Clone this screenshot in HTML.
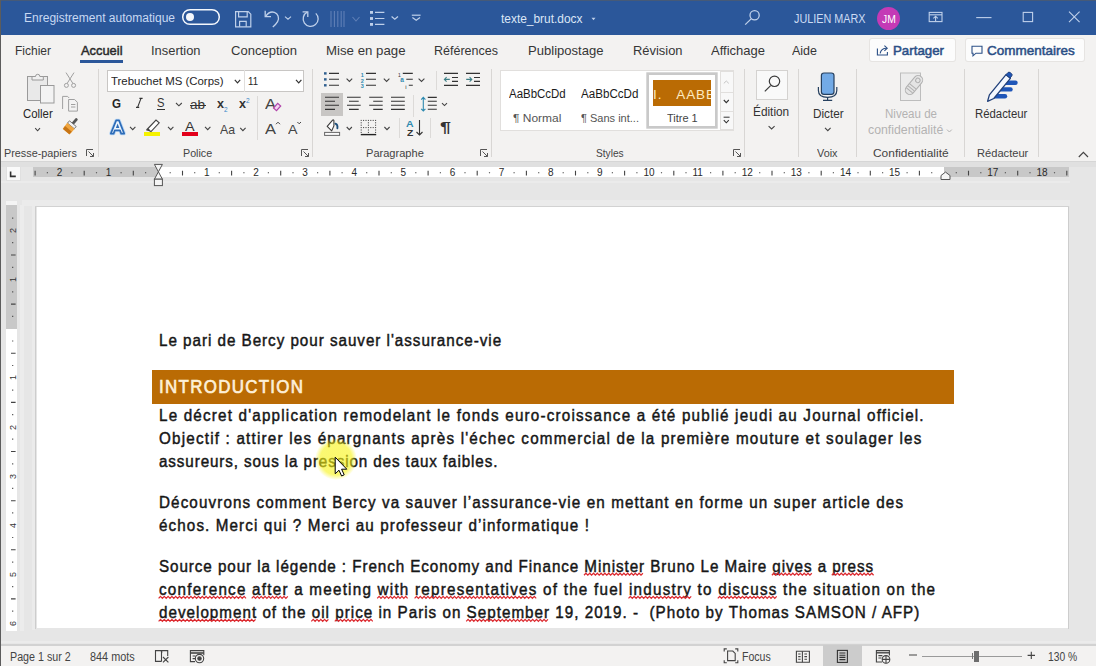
<!DOCTYPE html><html><head><meta charset='utf-8'><style>
html,body{margin:0;padding:0}body{width:1096px;height:666px;overflow:hidden;position:relative;background:#e6e6e6;font-family:'Liberation Sans',sans-serif}
.t{position:absolute;white-space:pre;line-height:1;transform-origin:0 0}.sq{}
</style></head><body>
<div style='position:absolute;left:0px;top:0px;width:1096px;height:35px;background:#2b579a;'></div>
<div style='position:absolute;left:0px;top:0px;width:1096px;height:1px;background:#465a78;'></div>
<div style='position:absolute;left:876.8px;top:6.5px;width:23.6px;height:23.6px;background:#c43ab6;border-radius:50%'></div>
<div style='position:absolute;left:0px;top:35px;width:1096px;height:126px;background:#f3f2f1;'></div>
<div style='position:absolute;left:80px;top:60px;width:43px;height:3px;background:#2b579a;'></div>
<div style='position:absolute;left:869.5px;top:39px;width:85px;height:22px;background:#fcfcfc;border-radius:2px;box-shadow:0 0 0 1px #e6e4e2'></div>
<div style='position:absolute;left:965.5px;top:39px;width:118.5px;height:22px;background:#fcfcfc;border-radius:2px;box-shadow:0 0 0 1px #e6e4e2'></div>
<div style='position:absolute;left:98px;top:69px;width:1px;height:88px;background:#d8d6d4;'></div>
<div style='position:absolute;left:312px;top:69px;width:1px;height:88px;background:#d8d6d4;'></div>
<div style='position:absolute;left:491px;top:69px;width:1px;height:88px;background:#d8d6d4;'></div>
<div style='position:absolute;left:744px;top:69px;width:1px;height:88px;background:#d8d6d4;'></div>
<div style='position:absolute;left:798px;top:69px;width:1px;height:88px;background:#d8d6d4;'></div>
<div style='position:absolute;left:856px;top:69px;width:1px;height:88px;background:#d8d6d4;'></div>
<div style='position:absolute;left:964px;top:69px;width:1px;height:88px;background:#d8d6d4;'></div>
<div style='position:absolute;left:1038px;top:69px;width:1px;height:88px;background:#d8d6d4;'></div>
<div style='position:absolute;left:106.5px;top:69.5px;width:197.5px;height:22px;background:#ffffff;box-shadow:inset 0 0 0 1px #c8c6c4'></div>
<div style='position:absolute;left:243.5px;top:69.5px;width:1px;height:22px;background:#e1dfdd;'></div>
<div style='position:absolute;left:157.2px;top:109px;width:7.6px;height:1.2px;background:#333;'></div>
<div style='position:absolute;left:189.8px;top:105px;width:16.2px;height:1.1px;background:#333;'></div>
<div style='position:absolute;left:257px;top:96px;width:1px;height:44px;background:#dcdad8;'></div>
<div style='position:absolute;left:143.7px;top:131.6px;width:16px;height:4px;background:#f5f200;'></div>
<div style='position:absolute;left:181.8px;top:131.6px;width:16.1px;height:4px;background:#e3001b;'></div>
<div style='position:absolute;left:435.5px;top:71px;width:1px;height:19px;background:#dcdad8;'></div>
<div style='position:absolute;left:321.2px;top:92.6px;width:21.7px;height:23px;background:#c8c6c4;'></div>
<div style='position:absolute;left:413px;top:95px;width:1px;height:22px;background:#dcdad8;'></div>
<div style='position:absolute;left:399px;top:118px;width:1px;height:20px;background:#dcdad8;'></div>
<div style='position:absolute;left:430.4px;top:118px;width:1px;height:20px;background:#dcdad8;'></div>
<div style='position:absolute;left:501.4px;top:70.7px;width:232px;height:59.5px;background:#ffffff;box-shadow:0 0 0 1px #e1dfdd'></div>
<div style='position:absolute;left:648.9px;top:75.4px;width:66.2px;height:50.6px;background:#ffffff;box-shadow:0 0 0 2.7px #c9c9c9'></div>
<div style='position:absolute;left:653px;top:80.2px;width:58px;height:25.5px;background:#ba6b04;'></div>
<div style='position:absolute;left:653px;top:80.2px;width:58px;height:25.5px;overflow:hidden'><div class='t' style='left:0px;top:7.4px;font-size:13.5px;color:#fde9c0;letter-spacing:0.9px;font-family:"Liberation Sans",sans-serif'>I.&nbsp;&nbsp;&nbsp;AABBCC</div></div>
<div style='position:absolute;left:719.6px;top:71px;width:14px;height:59px;background:#f8f8f8;box-shadow:inset 0 0 0 1px #e1dfdd'></div>
<div style='position:absolute;left:719.6px;top:92px;width:14px;height:1px;background:#e1dfdd;'></div>
<div style='position:absolute;left:719.6px;top:110.8px;width:14px;height:1px;background:#e1dfdd;'></div>
<div style='position:absolute;left:756px;top:69.5px;width:32px;height:30.3px;background:#f9f9f9;box-shadow:inset 0 0 0 1px #d4d2d0'></div>
<div style='position:absolute;left:0px;top:162px;width:1096px;height:483px;background:#e6e6e6;'></div>
<div style='position:absolute;left:0px;top:161px;width:1096px;height:1.4px;background:#d6d6d6;'></div>
<div style='position:absolute;left:0px;top:162.4px;width:1096px;height:4.6px;background:#e0e0e0;'></div>
<div style='position:absolute;left:6.6px;top:167.3px;width:13px;height:12.3px;background:#fafafa;box-shadow:0 0 0 1px #e0e0e0'></div>
<div style='position:absolute;left:32.8px;top:167.1px;width:1036.2px;height:9.5px;background:#ffffff;'></div>
<div style='position:absolute;left:32.8px;top:167.1px;width:125.1px;height:9.5px;background:#c8c8c8;'></div>
<div style='position:absolute;left:943.8px;top:167.1px;width:125.2px;height:9.5px;background:#c8c8c8;'></div>
<div style='position:absolute;left:0px;top:181px;width:1070px;height:1.6px;background:#ebebeb;'></div>
<div style='position:absolute;left:22px;top:200.2px;width:1048px;height:5.4px;background:#ebebeb;'></div>
<div style='position:absolute;left:6.3px;top:200.7px;width:10.4px;height:4.5px;background:#f4f4f4;'></div>
<div style='position:absolute;left:19.5px;top:205px;width:4px;height:426px;background:#ececec;'></div>
<div style='position:absolute;left:6.3px;top:205.2px;width:10.4px;height:123.5px;background:#c8c8c8;'></div>
<div style='position:absolute;left:6.3px;top:328.7px;width:10.4px;height:302px;background:#ffffff;'></div>
<div style='position:absolute;left:32.3px;top:206px;width:2.7px;height:424px;background:#ebebeb;'></div>
<div style='position:absolute;left:36.5px;top:206.8px;width:1031.4px;height:421.7px;background:#ffffff;'></div>
<div style='position:absolute;left:35.4px;top:206px;width:1.1px;height:423px;background:#cdcdcd;'></div>
<div style='position:absolute;left:1067.9px;top:206px;width:1.3px;height:423px;background:#cdcdcd;'></div>
<div style='position:absolute;left:35.4px;top:206px;width:1033.8px;height:0.8px;background:#d2d2d2;'></div>
<div style='position:absolute;left:152px;top:370.3px;width:802px;height:34.2px;background:#ba6b04;'></div>
<div style='position:absolute;left:0px;top:640.6px;width:1096px;height:2.2px;background:#ebebeb;'></div>
<div style='position:absolute;left:0px;top:645px;width:1096px;height:21px;background:#f3f2f1;'></div>
<div style='position:absolute;left:0px;top:644.4px;width:1096px;height:1.2px;background:#d2d2d2;'></div>
<div style='position:absolute;left:823px;top:644.6px;width:38.5px;height:21.4px;background:#cccccc;'></div>
<div style='position:absolute;left:921.5px;top:656px;width:100.5px;height:1px;background:#9a9a9a;'></div>
<div style='position:absolute;left:972.3px;top:653px;width:1px;height:6px;background:#777;'></div>
<div style='position:absolute;left:974px;top:651.2px;width:5px;height:10.4px;background:#6e6e6e;'></div>
<div class='t' style='left:24px;top:11.80px;font-size:12px;font-weight:400;color:#c8d9f3;font-family:"Liberation Sans", sans-serif;transform:scaleX(1.0017);'>Enregistrement automatique</div>
<div class='t' style='left:501px;top:12.80px;font-size:12px;font-weight:400;color:#dbe6f6;font-family:"Liberation Sans", sans-serif;transform:scaleX(0.9931);'>texte_brut.docx</div>
<div class='t' style='left:794px;top:12.70px;font-size:12px;font-weight:400;color:#cddcf3;font-family:"Liberation Sans", sans-serif;transform:scaleX(0.9010);'>JULIEN MARX</div>
<div class='t' style='left:881.6px;top:13.55px;font-size:11px;font-weight:400;color:#ffffff;font-family:"Liberation Sans", sans-serif;transform:scaleX(0.9406);'>JM</div>
<div class='t' style='left:15px;top:45.12px;font-size:12.8px;font-weight:400;color:#363636;font-family:"Liberation Sans", sans-serif;transform:scaleX(0.9373);'>Fichier</div>
<div class='t' style='left:80.5px;top:45.12px;font-size:12.8px;font-weight:400;color:#2a2a2a;font-family:"Liberation Sans", sans-serif;transform:scaleX(1.0057);-webkit-text-stroke:0.45px #2a2a2a'>Accueil</div>
<div class='t' style='left:151px;top:45.12px;font-size:12.8px;font-weight:400;color:#363636;font-family:"Liberation Sans", sans-serif;transform:scaleX(1.0083);'>Insertion</div>
<div class='t' style='left:231px;top:45.12px;font-size:12.8px;font-weight:400;color:#363636;font-family:"Liberation Sans", sans-serif;transform:scaleX(1.0193);'>Conception</div>
<div class='t' style='left:326px;top:45.12px;font-size:12.8px;font-weight:400;color:#363636;font-family:"Liberation Sans", sans-serif;transform:scaleX(1.0346);'>Mise en page</div>
<div class='t' style='left:434px;top:45.12px;font-size:12.8px;font-weight:400;color:#363636;font-family:"Liberation Sans", sans-serif;transform:scaleX(0.9778);'>Références</div>
<div class='t' style='left:527.5px;top:45.12px;font-size:12.8px;font-weight:400;color:#363636;font-family:"Liberation Sans", sans-serif;transform:scaleX(1.0203);'>Publipostage</div>
<div class='t' style='left:633px;top:45.12px;font-size:12.8px;font-weight:400;color:#363636;font-family:"Liberation Sans", sans-serif;transform:scaleX(1.0086);'>Révision</div>
<div class='t' style='left:710.5px;top:45.12px;font-size:12.8px;font-weight:400;color:#363636;font-family:"Liberation Sans", sans-serif;transform:scaleX(1.0165);'>Affichage</div>
<div class='t' style='left:792px;top:45.12px;font-size:12.8px;font-weight:400;color:#363636;font-family:"Liberation Sans", sans-serif;transform:scaleX(0.9756);'>Aide</div>
<div class='t' style='left:893.4px;top:44.72px;font-size:12.8px;font-weight:400;color:#2b4f86;font-family:"Liberation Sans", sans-serif;transform:scaleX(1.0388);-webkit-text-stroke:0.5px #2b4f86'>Partager</div>
<div class='t' style='left:987px;top:44.72px;font-size:12.8px;font-weight:400;color:#2b4f86;font-family:"Liberation Sans", sans-serif;transform:scaleX(1.0538);-webkit-text-stroke:0.5px #2b4f86'>Commentaires</div>
<div class='t' style='left:4.4px;top:147.72px;font-size:11.5px;font-weight:400;color:#444;font-family:"Liberation Sans", sans-serif;transform:scaleX(0.9413);'>Presse-papiers</div>
<div class='t' style='left:182.5px;top:147.72px;font-size:11.5px;font-weight:400;color:#444;font-family:"Liberation Sans", sans-serif;transform:scaleX(0.9321);'>Police</div>
<div class='t' style='left:365.5px;top:147.72px;font-size:11.5px;font-weight:400;color:#444;font-family:"Liberation Sans", sans-serif;transform:scaleX(0.9616);'>Paragraphe</div>
<div class='t' style='left:596.4px;top:147.72px;font-size:11.5px;font-weight:400;color:#444;font-family:"Liberation Sans", sans-serif;transform:scaleX(0.8810);'>Styles</div>
<div class='t' style='left:817.2px;top:147.72px;font-size:11.5px;font-weight:400;color:#444;font-family:"Liberation Sans", sans-serif;transform:scaleX(0.9425);'>Voix</div>
<div class='t' style='left:872.9px;top:147.72px;font-size:11.5px;font-weight:400;color:#444;font-family:"Liberation Sans", sans-serif;transform:scaleX(1.0372);'>Confidentialité</div>
<div class='t' style='left:976.5px;top:147.72px;font-size:11.5px;font-weight:400;color:#444;font-family:"Liberation Sans", sans-serif;transform:scaleX(0.9668);'>Rédacteur</div>
<div class='t' style='left:22.7px;top:108.20px;font-size:12px;font-weight:400;color:#262626;font-family:"Liberation Sans", sans-serif;transform:scaleX(0.9476);'>Coller</div>
<div class='t' style='left:110.8px;top:76.17px;font-size:11.8px;font-weight:400;color:#262626;font-family:"Liberation Sans", sans-serif;transform:scaleX(0.9676);'>Trebuchet MS (Corps)</div>
<div class='t' style='left:248px;top:76.17px;font-size:11.8px;font-weight:400;color:#262626;font-family:"Liberation Sans", sans-serif;transform:scaleX(0.8163);'>11</div>
<div class='t' style='left:112px;top:96.75px;font-size:13px;font-weight:700;color:#262626;font-family:"Liberation Sans", sans-serif;transform:scaleX(0.8889);'>G</div>
<div class='t' style='left:157.2px;top:97.38px;font-size:12.5px;font-weight:400;color:#333;font-family:"Liberation Sans", sans-serif;transform:scaleX(0.8989);'>S</div>
<div class='t' style='left:190.2px;top:98.88px;font-size:12.5px;font-weight:400;color:#333;font-family:"Liberation Sans", sans-serif;transform:scaleX(1.0787);'>ab</div>
<div class='t' style='left:217px;top:98.38px;font-size:12.5px;font-weight:700;color:#333;font-family:"Liberation Sans", sans-serif;transform:scaleX(1.0067);'>x</div>
<div class='t' style='left:224.2px;top:106.20px;font-size:8px;font-weight:400;color:#3a86c8;font-family:"Liberation Sans", sans-serif;transform:scaleX(0.8084);'>2</div>
<div class='t' style='left:238.6px;top:98.38px;font-size:12.5px;font-weight:700;color:#333;font-family:"Liberation Sans", sans-serif;transform:scaleX(1.0067);'>x</div>
<div class='t' style='left:245.8px;top:97.20px;font-size:8px;font-weight:400;color:#3a86c8;font-family:"Liberation Sans", sans-serif;transform:scaleX(0.8084);'>2</div>
<div class='t' style='left:264.6px;top:97.10px;font-size:14px;font-weight:400;color:#444;font-family:"Liberation Sans", sans-serif;transform:scaleX(1.1773);'>A</div>
<div class='t' style='left:185.4px;top:120.15px;font-size:13px;font-weight:400;color:#333;font-family:"Liberation Sans", sans-serif;transform:scaleX(1.1070);'>A</div>
<div class='t' style='left:219.7px;top:123.15px;font-size:13px;font-weight:400;color:#444;font-family:"Liberation Sans", sans-serif;transform:scaleX(0.9430);'>Aa</div>
<div class='t' style='left:264.6px;top:122.10px;font-size:14px;font-weight:400;color:#444;font-family:"Liberation Sans", sans-serif;transform:scaleX(1.1773);'>A</div>
<div class='t' style='left:288.3px;top:123.80px;font-size:12px;font-weight:400;color:#444;font-family:"Liberation Sans", sans-serif;transform:scaleX(1.1852);'>A</div>
<div class='t' style='left:360.8px;top:72.73px;font-size:5.5px;font-weight:700;color:#2e8ab0;font-family:"Liberation Sans", sans-serif;'>1</div>
<div class='t' style='left:360.8px;top:78.53px;font-size:5.5px;font-weight:700;color:#2e8ab0;font-family:"Liberation Sans", sans-serif;'>2</div>
<div class='t' style='left:360.8px;top:84.33px;font-size:5.5px;font-weight:700;color:#2e8ab0;font-family:"Liberation Sans", sans-serif;'>3</div>
<div class='t' style='left:398px;top:72.75px;font-size:5px;font-weight:400;color:#333333;font-family:"Liberation Sans", sans-serif;'>1</div>
<div class='t' style='left:400.2px;top:77.07px;font-size:6.5px;font-weight:700;color:#2e8ab0;font-family:"Liberation Sans", sans-serif;'>a</div>
<div class='t' style='left:405.2px;top:83.50px;font-size:6px;font-weight:400;color:#333333;font-family:"Liberation Sans", sans-serif;'>i</div>
<div class='t' style='left:406.1px;top:120.28px;font-size:8.5px;font-weight:700;color:#2e8ab0;font-family:"Liberation Sans", sans-serif;transform:scaleX(1.2377);'>A</div>
<div class='t' style='left:406.8px;top:129.18px;font-size:8.5px;font-weight:700;color:#333;font-family:"Liberation Sans", sans-serif;transform:scaleX(1.2108);'>Z</div>
<div class='t' style='left:440.4px;top:119.42px;font-size:15.5px;font-weight:700;color:#333;font-family:"Liberation Sans", sans-serif;transform:scaleX(1.2754);'>¶</div>
<div class='t' style='left:509px;top:88.17px;font-size:12.5px;font-weight:400;color:#1a1a1a;font-family:"Liberation Sans", sans-serif;transform:scaleX(0.9168);'>AaBbCcDd</div>
<div class='t' style='left:513.3px;top:113.02px;font-size:11.5px;font-weight:400;color:#555;font-family:"Liberation Sans", sans-serif;transform:scaleX(1.0423);'>¶ Normal</div>
<div class='t' style='left:580.6px;top:88.17px;font-size:12.5px;font-weight:400;color:#1a1a1a;font-family:"Liberation Sans", sans-serif;transform:scaleX(0.9281);'>AaBbCcDd</div>
<div class='t' style='left:580.6px;top:113.02px;font-size:11.5px;font-weight:400;color:#555;font-family:"Liberation Sans", sans-serif;transform:scaleX(0.9584);'>¶ Sans int...</div>
<div class='t' style='left:666.5px;top:112.72px;font-size:11.5px;font-weight:400;color:#444;font-family:"Liberation Sans", sans-serif;transform:scaleX(0.9542);'>Titre 1</div>
<div class='t' style='left:753.4px;top:106.30px;font-size:12px;font-weight:400;color:#333;font-family:"Liberation Sans", sans-serif;transform:scaleX(0.9863);'>Édition</div>
<div class='t' style='left:812.5px;top:108.00px;font-size:12px;font-weight:400;color:#333;font-family:"Liberation Sans", sans-serif;transform:scaleX(0.9795);'>Dicter</div>
<div class='t' style='left:884.7px;top:108.20px;font-size:12px;font-weight:400;color:#b3b3b3;font-family:"Liberation Sans", sans-serif;transform:scaleX(0.9621);'>Niveau de</div>
<div class='t' style='left:867.7px;top:124.10px;font-size:12px;font-weight:400;color:#b3b3b3;font-family:"Liberation Sans", sans-serif;transform:scaleX(1.0260);'>confidentialité</div>
<div class='t' style='left:975.4px;top:108.00px;font-size:12px;font-weight:400;color:#333;font-family:"Liberation Sans", sans-serif;transform:scaleX(0.9463);'>Rédacteur</div>
<div class='t' style='left:56.64px;top:168.10px;font-size:10px;font-weight:400;color:#2a2a2a;font-family:"Liberation Sans", sans-serif;'>2</div>
<div class='t' style='left:105.77000000000001px;top:168.10px;font-size:10px;font-weight:400;color:#2a2a2a;font-family:"Liberation Sans", sans-serif;'>1</div>
<div class='t' style='left:204.03px;top:168.10px;font-size:10px;font-weight:400;color:#2a2a2a;font-family:"Liberation Sans", sans-serif;'>1</div>
<div class='t' style='left:253.16000000000003px;top:168.10px;font-size:10px;font-weight:400;color:#2a2a2a;font-family:"Liberation Sans", sans-serif;'>2</div>
<div class='t' style='left:302.29px;top:168.10px;font-size:10px;font-weight:400;color:#2a2a2a;font-family:"Liberation Sans", sans-serif;'>3</div>
<div class='t' style='left:351.42px;top:168.10px;font-size:10px;font-weight:400;color:#2a2a2a;font-family:"Liberation Sans", sans-serif;'>4</div>
<div class='t' style='left:400.55px;top:168.10px;font-size:10px;font-weight:400;color:#2a2a2a;font-family:"Liberation Sans", sans-serif;'>5</div>
<div class='t' style='left:449.68000000000006px;top:168.10px;font-size:10px;font-weight:400;color:#2a2a2a;font-family:"Liberation Sans", sans-serif;'>6</div>
<div class='t' style='left:498.81000000000006px;top:168.10px;font-size:10px;font-weight:400;color:#2a2a2a;font-family:"Liberation Sans", sans-serif;'>7</div>
<div class='t' style='left:547.94px;top:168.10px;font-size:10px;font-weight:400;color:#2a2a2a;font-family:"Liberation Sans", sans-serif;'>8</div>
<div class='t' style='left:597.07px;top:168.10px;font-size:10px;font-weight:400;color:#2a2a2a;font-family:"Liberation Sans", sans-serif;'>9</div>
<div class='t' style='left:643.4000000000001px;top:168.10px;font-size:10px;font-weight:400;color:#2a2a2a;font-family:"Liberation Sans", sans-serif;'>10</div>
<div class='t' style='left:692.5300000000001px;top:168.10px;font-size:10px;font-weight:400;color:#2a2a2a;font-family:"Liberation Sans", sans-serif;'>11</div>
<div class='t' style='left:741.6600000000001px;top:168.10px;font-size:10px;font-weight:400;color:#2a2a2a;font-family:"Liberation Sans", sans-serif;'>12</div>
<div class='t' style='left:790.7900000000001px;top:168.10px;font-size:10px;font-weight:400;color:#2a2a2a;font-family:"Liberation Sans", sans-serif;'>13</div>
<div class='t' style='left:839.9200000000001px;top:168.10px;font-size:10px;font-weight:400;color:#2a2a2a;font-family:"Liberation Sans", sans-serif;'>14</div>
<div class='t' style='left:889.0500000000001px;top:168.10px;font-size:10px;font-weight:400;color:#2a2a2a;font-family:"Liberation Sans", sans-serif;'>15</div>
<div class='t' style='left:987.3100000000001px;top:168.10px;font-size:10px;font-weight:400;color:#2a2a2a;font-family:"Liberation Sans", sans-serif;'>17</div>
<div class='t' style='left:1036.44px;top:168.10px;font-size:10px;font-weight:400;color:#2a2a2a;font-family:"Liberation Sans", sans-serif;'>18</div>
<div class='t' style='left:158.6px;top:333.20px;font-size:16px;font-weight:400;color:#161616;font-family:"Liberation Sans", sans-serif;letter-spacing:1.0232px;transform:scaleX(0.95);-webkit-text-stroke:0.45px #161616'>Le pari de Bercy pour sauver l'assurance-vie</div>
<div class='t' style='left:158.6px;top:407.80px;font-size:16px;font-weight:400;color:#161616;font-family:"Liberation Sans", sans-serif;letter-spacing:1.2595px;transform:scaleX(0.95);-webkit-text-stroke:0.45px #161616'>Le décret d'application remodelant le fonds euro-croissance a été publié jeudi au Journal officiel.</div>
<div class='t' style='left:158.6px;top:431.10px;font-size:16px;font-weight:400;color:#161616;font-family:"Liberation Sans", sans-serif;letter-spacing:1.2679px;transform:scaleX(0.95);-webkit-text-stroke:0.45px #161616'>Objectif : attirer les épargnants après l'échec commercial de la première mouture et soulager les</div>
<div class='t' style='left:158.6px;top:454.40px;font-size:16px;font-weight:400;color:#161616;font-family:"Liberation Sans", sans-serif;letter-spacing:0.9405px;transform:scaleX(0.95);-webkit-text-stroke:0.45px #161616'>assureurs, sous la pression des taux faibles.</div>
<div class='t' style='left:158.6px;top:494.90px;font-size:16px;font-weight:400;color:#161616;font-family:"Liberation Sans", sans-serif;letter-spacing:1.1724px;transform:scaleX(0.95);-webkit-text-stroke:0.45px #161616'>Découvrons comment Bercy va sauver l’assurance-vie en mettant en forme un super article des</div>
<div class='t' style='left:158.6px;top:518.40px;font-size:16px;font-weight:400;color:#161616;font-family:"Liberation Sans", sans-serif;letter-spacing:1.1688px;transform:scaleX(0.95);-webkit-text-stroke:0.45px #161616'>échos. Merci qui ? Merci au professeur d’informatique !</div>
<div class='t' style='left:158.6px;top:558.60px;font-size:16px;font-weight:400;color:#161616;font-family:"Liberation Sans", sans-serif;letter-spacing:0.9820px;transform:scaleX(0.95);-webkit-text-stroke:0.45px #161616'>Source pour la légende : French Economy and Finance <span class='sq'>Minister</span> Bruno Le Maire <span class='sq'>gives</span> a <span class='sq'>press</span></div>
<div class='t' style='left:158.6px;top:581.80px;font-size:16px;font-weight:400;color:#161616;font-family:"Liberation Sans", sans-serif;letter-spacing:1.3060px;transform:scaleX(0.95);-webkit-text-stroke:0.45px #161616'><span class='sq'>conference</span> <span class='sq'>after</span> a meeting <span class='sq'>with</span> <span class='sq'>representatives</span> of the fuel <span class='sq'>industry</span> to <span class='sq'>discuss</span> the situation on the</div>
<div class='t' style='left:158.6px;top:604.80px;font-size:16px;font-weight:400;color:#161616;font-family:"Liberation Sans", sans-serif;letter-spacing:1.0634px;transform:scaleX(0.95);-webkit-text-stroke:0.45px #161616'><span class='sq'>development</span> of the <span class='sq'>oil</span> <span class='sq'>price</span> in Paris on <span class='sq'>September</span> 19, 2019. -  (Photo by Thomas SAMSON / AFP)</div>
<div class='t' style='left:159.2px;top:377.62px;font-size:18.8px;font-weight:400;color:#fdf0d8;font-family:"Liberation Sans", sans-serif;letter-spacing:1.4560px;transform:scaleX(0.9);-webkit-text-stroke:0.7px #fdf0d8'>INTRODUCTION</div>
<div class='t' style='left:9.6px;top:651.00px;font-size:12px;font-weight:400;color:#444;font-family:"Liberation Sans", sans-serif;transform:scaleX(0.8920);'>Page 1 sur 2</div>
<div class='t' style='left:90.3px;top:651.00px;font-size:12px;font-weight:400;color:#444;font-family:"Liberation Sans", sans-serif;transform:scaleX(0.9056);'>844 mots</div>
<div class='t' style='left:741.6px;top:651.30px;font-size:12px;font-weight:400;color:#444;font-family:"Liberation Sans", sans-serif;transform:scaleX(0.8780);'>Focus</div>
<div class='t' style='left:1048.4px;top:650.60px;font-size:12px;font-weight:400;color:#444;font-family:"Liberation Sans", sans-serif;transform:scaleX(0.8580);'>130 %</div>
<svg style='position:absolute;left:0;top:0' width='1096' height='666' viewBox='0 0 1096 666'><rect x='182.7' y='9.7' width='36.6' height='14.6' rx='7.3' fill='none' stroke='#f4f7fc' stroke-width='1.5'/><circle cx='190' cy='17' r='4' fill='#f4f7fc'/><g fill='none' stroke='#bfd0ea' stroke-width='1.2'><path d='M235.6 11.6h12.6l2.6 2.6v12.6h-15.2z'/><path d='M238.6 11.6v5.2h8.6v-5.2'/><path d='M239.6 26.8v-5.4h6.6v5.4'/></g><g fill='none' stroke='#bfd0ea' stroke-width='1.3'><path d='M265.2 10.8v5.8h5.8'/><path d='M265.8 16.2c2.5-3.6 5.6-4.8 8.6-3.8 3.6 1.2 5.2 5.4 3.2 9.2-1.2 2.2-3 3.8-4.8 5.4'/></g><path d='M285 16.6 l3.0 2.6 l3.0 -2.6' fill='none' stroke='#bfd0ea' stroke-width='1.1'/><g fill='none' stroke='#bfd0ea' stroke-width='1.3'><path d='M315.8 13.4a7.5 7.5 0 1 1 -8.6 -1.2'/><path d='M302.6 11.8h5.2v5.2'/></g><g fill='none' stroke='#5f7fb6' stroke-width='1.1'><path d='M331 11v16M334.4 11v16M337.8 11v16M341.2 11v16M344 11v16'/></g><path d='M352.5 17 l3.5 4 l3.5 -4' fill='none' stroke='#5f7fb6' stroke-width='1.1'/><g fill='#bfd0ea'><rect x='370' y='11' width='3' height='2.8'/><rect x='370' y='17.1' width='3' height='2.8'/><rect x='370' y='23' width='3' height='2.8'/></g><g stroke='#bfd0ea' stroke-width='1.2'><path d='M375 12.4h9.4M375 18.5h9.4M375 24.4h9.4'/></g><path d='M391.6 16.5 l3.2 2.8 l3.2 -2.8' fill='none' stroke='#bfd0ea' stroke-width='1.2'/><g fill='none' stroke='#bfd0ea' stroke-width='1.2'><path d='M411.8 15.2h8.8'/><path d='M412.4 17.4l3.8 2.8l3.8 -2.8'/></g><path d='M591.5 17.8h4l-2 2.4z' fill='#bfd0ea'/><g fill='none' stroke='#bfd0ea' stroke-width='1.3'><circle cx='754.6' cy='15.2' r='4.6'/><path d='M751.4 18.6l-6.2 6'/></g><g fill='none' stroke='#bfd0ea' stroke-width='1.1'><rect x='929.2' y='12.4' width='12.8' height='9.2'/><path d='M929.2 14.8h12.8'/><path d='M935.6 21.4v-5M933.4 18.4l2.2-2.2l2.2 2.2'/></g><g fill='none' stroke='#bfd0ea' stroke-width='1.1'><path d='M976.2 17.6h15.3'/><rect x='1023.2' y='12.4' width='9.4' height='9.2'/><path d='M1069 11.6l10.6 10.6M1079.6 11.6l-10.6 10.6'/></g><g fill='none' stroke='#2b4f86' stroke-width='1.1'><path d='M877.4 48.4v6.6h10v-3'/><path d='M880.2 53.4c.4-3.4 2.6-5.2 6.6-5.2'/><path d='M884.4 45.6l2.8 2.6l-2.8 2.6'/></g><path d='M972 46.2h10v7h-6l-3 2.6v-2.6h-1z' fill='none' stroke='#2b4f86' stroke-width='1.1'/><g fill='none' stroke='#555' stroke-width='1'><path d='M86.5 156v-6.5h6.5'/><path d='M88.5 151.5l5 5M93.5 153v3.5h-3.5'/></g><g fill='none' stroke='#555' stroke-width='1'><path d='M301.5 156v-6.5h6.5'/><path d='M303.5 151.5l5 5M308.5 153v3.5h-3.5'/></g><g fill='none' stroke='#555' stroke-width='1'><path d='M480.5 156v-6.5h6.5'/><path d='M482.5 151.5l5 5M487.5 153v3.5h-3.5'/></g><g fill='none' stroke='#555' stroke-width='1'><path d='M733.5 156v-6.5h6.5'/><path d='M735.5 151.5l5 5M740.5 153v3.5h-3.5'/></g><g stroke='#9a9a9a' stroke-width='1' fill='#e9e9e9'><rect x='27.5' y='76.5' width='20' height='24'/><path d='M32 80v-3.5h3.5a2.2 2.2 0 0 1 4.4 0h3.4v3.5z' fill='#f0f0f0'/><rect x='40.5' y='85.5' width='13.5' height='17.5' fill='#f3f3f3'/></g><path d='M35.2 128.2 l2.4 2.6 l2.4 -2.6' fill='none' stroke='#444' stroke-width='1.1'/><g fill='none' stroke='#a0a0a0' stroke-width='1'><path d='M66 72.6l7 11M74 72.6l-7 11'/><circle cx='66.4' cy='85.4' r='2'/><circle cx='73.6' cy='85.4' r='2'/></g><g fill='none' stroke='#a0a0a0' stroke-width='1'><path d='M62.6 109v-12.6h5l1.6 1.6'/><path d='M68.6 99.5h6l2.8 2.8v8.8h-8.8z' fill='#f3f3f3'/><path d='M71 104.5h4.4M71 107h4.4'/></g><g transform='rotate(40 70 127)'><rect x='68.6' y='116' width='2.8' height='7' rx='1' fill='#555'/><rect x='65.6' y='122.6' width='8.8' height='3' fill='#f2f2f2' stroke='#666' stroke-width='0.8'/><path d='M65.2 125.6h9.6l-.4 7.4h-8.8z' fill='#f0a640'/><path d='M65.6 129.4h8.8l-.3 3.6h-8.2z' fill='#c77515'/></g><path d='M234.8 79.8 l2.7 3 l2.7 -3' fill='none' stroke='#333' stroke-width='1.2'/><path d='M296 79.8 l2.7 3 l2.7 -3' fill='none' stroke='#333' stroke-width='1.2'/><path d='M139.4 98.4h3.2M136 107.4h3.2M141 98.4l-3.4 9' fill='none' stroke='#333' stroke-width='1.1'/><path d='M176 103 l2.9 2.8 l2.9 -2.8' fill='none' stroke='#444' stroke-width='1.1'/><path d='M273.5 108l4.2-4.6l3 2.6l-4.2 4.6z' fill='#f3d4f1' stroke='#b145aa' stroke-width='1.2'/><g><path d='M110.8 133.6l5.4-13.2h2.8l5.2 13.2h-3l-1.2-3.2h-5.2l-1.2 3.2z' fill='none' stroke='#bcd8f4' stroke-width='3.4' stroke-linejoin='round'/><path d='M110.8 133.6l5.4-13.2h2.8l5.2 13.2h-3l-1.2-3.2h-5.2l-1.2 3.2z' fill='#eef5fc' stroke='#2d6cb8' stroke-width='1.7' stroke-linejoin='round'/><path d='M115.9 128h3.4l-1.7-4.6z' fill='#2d6cb8'/></g><path d='M130 126.8 l2.7 2.8 l2.7 -2.8' fill='none' stroke='#444' stroke-width='1.1'/><g><path d='M147 129.5l9-9.5 3.2 2.8-8.2 8.8z' fill='#ffffff' stroke='#444' stroke-width='1.1'/><path d='M146 130.6l2.4-2.4 2 2.2z' fill='#444'/></g><path d='M168 126.8 l2.7 2.8 l2.7 -2.8' fill='none' stroke='#444' stroke-width='1.1'/><path d='M205 126.8 l2.7 2.8 l2.7 -2.8' fill='none' stroke='#444' stroke-width='1.1'/><path d='M240.2 127.8 l2.7 2.8 l2.7 -2.8' fill='none' stroke='#444' stroke-width='1.1'/><path d='M276 124.2l2-2l2 2' fill='none' stroke='#444' stroke-width='1'/><path d='M297.4 122l1.8 1.8l1.8-1.8' fill='none' stroke='#444' stroke-width='1'/><g fill='#2f5f8f'><rect x='324' y='72.2' width='2.6' height='2.4'/><rect x='324' y='78.2' width='2.6' height='2.4'/><rect x='324' y='84.1' width='2.6' height='2.4'/></g><path d='M329 73.4h10M329 79.3h10M329 85.3h10' stroke='#333333' stroke-width='1.1'/><path d='M346.6 78.6 l2.8 2.8 l2.8 -2.8' fill='none' stroke='#444' stroke-width='1.1'/><path d='M366 73.4h10M366 79.3h10M366 85.3h10' stroke='#333333' stroke-width='1.1'/><path d='M383.8 78.6 l2.8 2.8 l2.8 -2.8' fill='none' stroke='#444' stroke-width='1.1'/><path d='M402.8 73.4h10M406.3 79.3h6.5M408.8 85.3h4' stroke='#333333' stroke-width='1.1'/><path d='M418.6 78.6 l2.9 2.8 l2.9 -2.8' fill='none' stroke='#444' stroke-width='1.1'/><path d='M444 73.4h14M452 77.5h6M452 81.4h6M444 85.4h14M466 73.4h14M474 77.5h6M474 81.4h6M466 85.4h14' stroke='#333333' stroke-width='1.1'/><g fill='none' stroke='#3d7f86' stroke-width='1.1'><path d='M444.4 79.4h5.4M446.6 77.2l-2.2 2.2l2.2 2.2'/><path d='M466.2 79.4h5.6M469.6 77.2l2.2 2.2l-2.2 2.2'/></g><path d='M325 97.3h14M325 101.3h10M325 105.3h14M325 109.4h10' stroke='#333333' stroke-width='1.1'/><path d='M347 97.3h13.7M349 101.3h9.7M347 105.3h13.7M349 109.4h9.7' stroke='#333333' stroke-width='1.1'/><path d='M369.2 97.3h13.5M373.2 101.3h9.5M369.2 105.3h13.5M373.2 109.4h9.5' stroke='#333333' stroke-width='1.1'/><path d='M391 97.3h13.8M391 101.3h13.8M391 105.3h13.8M391 109.4h13.8' stroke='#333333' stroke-width='1.1'/><g fill='none' stroke='#2e8ab0' stroke-width='1.1'><path d='M423.3 97.4v13.6M421.2 99.6l2.1-2.2l2.1 2.2M421.2 108.8l2.1 2.2l2.1-2.2'/></g><path d='M427.8 97.4h9M427.8 101.2h9M427.8 105.2h9M427.8 109.2h9' stroke='#333333' stroke-width='1.1'/><path d='M442 103.2 l2.5 2.4 l2.5 -2.4' fill='none' stroke='#444' stroke-width='1.1'/><g><path d='M327.2 126.4l5.4-6.2c.6-.6 1.3-.3 1.3.5v5.2l-2.2 5z' fill='#fff' stroke='#3a3a3a' stroke-width='1.1' stroke-linejoin='round'/><path d='M335.4 123.6c1.6.6 2.4 2.4 2 4.8' fill='none' stroke='#1f4f7a' stroke-width='1.8' stroke-linecap='round'/><rect x='324.6' y='132.4' width='15' height='3' fill='#fafafa' stroke='#666' stroke-width='1'/></g><path d='M346.7 127 l2.6 2.6 l2.6 -2.6' fill='none' stroke='#444' stroke-width='1.1'/><g fill='#333'><rect x='360.7' y='119.9' width='1' height='1'/><rect x='360.7' y='127.1' width='1' height='1'/><rect x='363.1' y='119.9' width='1' height='1'/><rect x='363.1' y='127.1' width='1' height='1'/><rect x='365.5' y='119.9' width='1' height='1'/><rect x='365.5' y='127.1' width='1' height='1'/><rect x='367.9' y='119.9' width='1' height='1'/><rect x='367.9' y='127.1' width='1' height='1'/><rect x='370.3' y='119.9' width='1' height='1'/><rect x='370.3' y='127.1' width='1' height='1'/><rect x='372.7' y='119.9' width='1' height='1'/><rect x='372.7' y='127.1' width='1' height='1'/><rect x='375.1' y='119.9' width='1' height='1'/><rect x='375.1' y='127.1' width='1' height='1'/><rect x='360.7' y='122.3' width='1' height='1'/><rect x='367.9' y='122.3' width='1' height='1'/><rect x='375.1' y='122.3' width='1' height='1'/><rect x='360.7' y='124.7' width='1' height='1'/><rect x='367.9' y='124.7' width='1' height='1'/><rect x='375.1' y='124.7' width='1' height='1'/><rect x='360.7' y='129.5' width='1' height='1'/><rect x='367.9' y='129.5' width='1' height='1'/><rect x='375.1' y='129.5' width='1' height='1'/><rect x='360.7' y='131.9' width='1' height='1'/><rect x='367.9' y='131.9' width='1' height='1'/><rect x='375.1' y='131.9' width='1' height='1'/></g><path d='M360.8 134.6h15.4' stroke='#222' stroke-width='1.4'/><path d='M384.4 127 l2.6 2.6 l2.6 -2.6' fill='none' stroke='#444' stroke-width='1.1'/><g fill='none' stroke='#333' stroke-width='1.1'><path d='M419.5 120v15M416.5 132l3 3l3-3'/></g><path d='M723.8 83.4 l2.5 -2.4 l2.5 2.4' fill='none' stroke='#c4c4c4' stroke-width='1'/><path d='M723.8 100 l2.5 2.6 l2.5 -2.6' fill='none' stroke='#333' stroke-width='1.1'/><path d='M723.6 117.2h6' stroke='#333' stroke-width='1'/><path d='M723.8 120.2 l2.5 2.6 l2.5 -2.6' fill='none' stroke='#333' stroke-width='1.1'/><g fill='none' stroke='#3a3a3a' stroke-width='1.2'><circle cx='774.5' cy='81.3' r='5.2'/><path d='M770.6 85.6l-5.8 5.8'/></g><path d='M768.6 126.2 l3.0 2.8 l3.0 -2.8' fill='none' stroke='#444' stroke-width='1.1'/><g><rect x='821.4' y='73' width='12.6' height='21.4' rx='2.6' fill='#72aae6' stroke='#26405f' stroke-width='1.2'/><path d='M818.4 87v3.6c0 3.8 2.6 6.8 9.2 6.8s9.2-3 9.2-6.8v-3.6' fill='none' stroke='#26405f' stroke-width='1.2'/><path d='M827.6 97.4v2.8M823 100.3h9.2' stroke='#26405f' stroke-width='1.2'/></g><path d='M825 127.8 l2.8 2.8 l2.8 -2.8' fill='none' stroke='#444' stroke-width='1.1'/><g><rect x='900.5' y='73' width='20' height='27.5' fill='#ececec' stroke='#bdbdbd' stroke-width='1'/><g transform='rotate(-50 914 85)'><rect x='903' y='80.5' width='22' height='9' rx='4.5' fill='#e4e4e4' stroke='#b0b0b0' stroke-width='1'/><path d='M907 81v8M909.6 81v8M912.2 81v8' stroke='#b0b0b0' stroke-width='1'/><circle cx='920' cy='85' r='2.2' fill='none' stroke='#b0b0b0' stroke-width='1'/></g></g><path d='M947 129.6 l2.4 2.4 l2.4 -2.4' fill='none' stroke='#b3b3b3' stroke-width='1'/><g><path d='M1001 80.5h14.5a2.2 2.2 0 0 1 0 4.4h-17.5z' fill='#1f56b8'/><path d='M996.5 87.2h14a2.2 2.2 0 0 1 0 4.4h-17z' fill='#1f56b8'/><path d='M992.5 94h12.5a2.2 2.2 0 0 1 0 4.4h-15z' fill='#1f56b8'/><path d='M987.6 101.3l1.8-6.4l16.6-20.2l4.4 3.6l-16.6 20.2z' fill='#f4f8ff' stroke='#22417a' stroke-width='1.3' stroke-linejoin='round'/><path d='M1006 74.7l1.6-1.8a2 2 0 0 1 2.8-.2l1 .8a2 2 0 0 1 .2 2.8l-1.6 1.8z' fill='#1f56b8' stroke='#22417a' stroke-width='1'/></g><path d='M1078.8 157l4.6-4.6l4.6 4.6' fill='none' stroke='#444' stroke-width='1.2'/><path d='M10.6 171.4v5h5.2' fill='none' stroke='#333' stroke-width='1.6'/><path d='M35.1 170.8v4.7M46.8 172.8h1.2M71.3 172.8h1.2M84.2 170.8v4.7M95.9 172.8h1.2M120.5 172.8h1.2M133.3 170.8v4.7M145.0 172.8h1.2M169.6 172.8h1.2M182.5 170.8v4.7M194.1 172.8h1.2M218.7 172.8h1.2M231.6 170.8v4.7M243.3 172.8h1.2M267.8 172.8h1.2M280.7 170.8v4.7M292.4 172.8h1.2M317.0 172.8h1.2M329.9 170.8v4.7M341.5 172.8h1.2M366.1 172.8h1.2M379.0 170.8v4.7M390.7 172.8h1.2M415.2 172.8h1.2M428.1 170.8v4.7M439.8 172.8h1.2M464.4 172.8h1.2M477.2 170.8v4.7M488.9 172.8h1.2M513.5 172.8h1.2M526.4 170.8v4.7M538.1 172.8h1.2M562.6 172.8h1.2M575.5 170.8v4.7M587.2 172.8h1.2M611.8 172.8h1.2M624.6 170.8v4.7M636.3 172.8h1.2M660.9 172.8h1.2M673.8 170.8v4.7M685.4 172.8h1.2M710.0 172.8h1.2M722.9 170.8v4.7M734.6 172.8h1.2M759.1 172.8h1.2M772.0 170.8v4.7M783.7 172.8h1.2M808.3 172.8h1.2M821.2 170.8v4.7M832.8 172.8h1.2M857.4 172.8h1.2M870.3 170.8v4.7M882.0 172.8h1.2M906.5 172.8h1.2M919.4 170.8v4.7M931.1 172.8h1.2M955.7 172.8h1.2M968.5 170.8v4.7M980.2 172.8h1.2M1004.8 172.8h1.2M1017.7 170.8v4.7M1029.4 172.8h1.2M1053.9 172.8h1.2M1066.8 170.8v4.7' stroke='#444' stroke-width='1.1'/><g fill='#f5f5f5' stroke='#555' stroke-width='1'><path d='M154.4 164.4h8l-4 7.4z'/><path d='M158.4 171.8l4 7.4h-8z'/><rect x='154.4' y='179.2' width='8' height='6.4'/></g><path d='M941 179.5v-4l4.5-3.4l4.5 3.4v4z' fill='#f5f5f5' stroke='#555' stroke-width='1'/><path d='M12.7 217.6v1.2M12.7 242.1v1.2M11 255.0h4.6M12.7 266.7v1.2M12.7 291.3v1.2M11 304.1h4.6M12.7 315.8v1.2M12.7 340.4v1.2M11 353.3h4.6M12.7 364.9v1.2M12.7 389.5v1.2M11 402.4h4.6M12.7 414.1v1.2M12.7 438.6v1.2M11 451.5h4.6M12.7 463.2v1.2M12.7 487.8v1.2M11 500.7h4.6M12.7 512.3v1.2M12.7 536.9v1.2M11 549.8h4.6M12.7 561.5v1.2M12.7 586.0v1.2M11 598.9h4.6M12.7 610.6v1.2' stroke='#444' stroke-width='1.1'/><g fill='none' stroke='#444' stroke-width='1.1'><path d='M161.5 661.4h-6v-10.8h5.2l1 1v-1h6v5.4'/><path d='M161.5 651.4v10M163 657l5.4 5.4M168.4 657l-5.4 5.4'/></g><g fill='none' stroke='#444' stroke-width='1.1'><path d='M195 661.6h-4.6v-11h13.4v4.6'/><path d='M190.4 653h13.4' stroke-width='1.6'/><path d='M192.6 656h3M192.6 658.6h3'/><circle cx='199.5' cy='658.6' r='4.2'/><circle cx='199.5' cy='658.6' r='1.7' fill='#444'/></g><g fill='none' stroke='#444' stroke-width='1.1'><path d='M724.2 651.5v-2.6h2.6M735.2 648.9h2.6v2.6M737.8 660.2v2.6h-2.6M726.8 662.8h-2.6v-2.6'/><path d='M727.6 651h5.2l2.4 2.4v7.2h-7.6z'/></g><g fill='none' stroke='#444' stroke-width='1.1'><path d='M802.4 651.2h-6v11h13v-11h-6z'/><path d='M802.4 651.2v11'/><path d='M798.2 654h2.4M798.2 656.6h2.4M798.2 659.2h2.4M804.4 654h2.6M804.4 656.6h2.6M804.4 659.2h2.6'/></g><g fill='none' stroke='#333' stroke-width='1.1'><rect x='837.4' y='650.4' width='10' height='12'/><path d='M839.4 653h6M839.4 655.2h6M839.4 657.4h6M839.4 659.6h6'/></g><g fill='none' stroke='#444' stroke-width='1.1'><path d='M882 662h-5.6v-11.4h13v5'/><path d='M876.4 652.8h13' stroke-width='1.4'/><path d='M878.4 655.6h4M878.4 658h3'/><circle cx='886' cy='659.4' r='3.8'/><path d='M882.2 659.4h7.6M886 655.6v7.6'/></g><path d='M909 655h8M1027.6 655.4h7.4M1031.3 651.7v7.4' stroke='#444' stroke-width='1.1'/></svg>
<div class='t' style='left:8.5px;top:225.9px;width:9px;height:9px;font-size:9px;color:#333;font-family:"Liberation Sans",sans-serif;transform:rotate(-90deg);transform-origin:4.5px 4.5px;text-align:center;line-height:9px'>2</div>
<div class='t' style='left:8.5px;top:275.1px;width:9px;height:9px;font-size:9px;color:#333;font-family:"Liberation Sans",sans-serif;transform:rotate(-90deg);transform-origin:4.5px 4.5px;text-align:center;line-height:9px'>1</div>
<div class='t' style='left:8.5px;top:373.3px;width:9px;height:9px;font-size:9px;color:#333;font-family:"Liberation Sans",sans-serif;transform:rotate(-90deg);transform-origin:4.5px 4.5px;text-align:center;line-height:9px'>1</div>
<div class='t' style='left:8.5px;top:422.5px;width:9px;height:9px;font-size:9px;color:#333;font-family:"Liberation Sans",sans-serif;transform:rotate(-90deg);transform-origin:4.5px 4.5px;text-align:center;line-height:9px'>2</div>
<div class='t' style='left:8.5px;top:471.6px;width:9px;height:9px;font-size:9px;color:#333;font-family:"Liberation Sans",sans-serif;transform:rotate(-90deg);transform-origin:4.5px 4.5px;text-align:center;line-height:9px'>3</div>
<div class='t' style='left:8.5px;top:520.7px;width:9px;height:9px;font-size:9px;color:#333;font-family:"Liberation Sans",sans-serif;transform:rotate(-90deg);transform-origin:4.5px 4.5px;text-align:center;line-height:9px'>4</div>
<div class='t' style='left:8.5px;top:569.9px;width:9px;height:9px;font-size:9px;color:#333;font-family:"Liberation Sans",sans-serif;transform:rotate(-90deg);transform-origin:4.5px 4.5px;text-align:center;line-height:9px'>5</div>
<div class='t' style='left:8.5px;top:619.0px;width:9px;height:9px;font-size:9px;color:#333;font-family:"Liberation Sans",sans-serif;transform:rotate(-90deg);transform-origin:4.5px 4.5px;text-align:center;line-height:9px'>6</div>
<div style='position:absolute;left:314.5px;top:437.5px;width:42px;height:42px;border-radius:50%;background:radial-gradient(circle closest-side, rgba(248,244,20,0.62) 0%, rgba(248,244,20,0.6) 75%, rgba(248,244,20,0) 100%)'></div>
<svg style='position:absolute;left:0;top:0' width='1096' height='666' viewBox='0 0 1096 666'><path d='M335.2 457.2v16.6l3.8-3.6l2.6 5.8l2.6-1.2l-2.6-5.6h5.2z' fill='#ffffff' stroke='#000' stroke-width='1'/></svg>
<div style='position:absolute;left:0;top:0;width:1px;height:666px;background:#5c5c5c'></div>
<svg style='position:absolute;left:0;top:0' width='1096' height='666' viewBox='0 0 1096 666'><path d='M584.0 575.2L585.9 573.2L587.8 575.2L589.7 573.2L591.6 575.2L593.5 573.2L595.4 575.2L597.3 573.2L599.2 575.2L601.1 573.2L603.0 575.2L604.9 573.2L606.8 575.2L608.7 573.2L610.6 575.2L612.5 573.2L614.4 575.2L616.3 573.2L618.2 575.2L620.1 573.2L622.0 575.2L623.9 573.2L625.8 575.2L627.7 573.2L629.6 575.2L631.5 573.2L633.4 575.2L635.3 573.2L637.2 575.2L639.1 573.2L641.0 575.2L642.9 573.2M771.9 575.2L773.8 573.2L775.7 575.2L777.6 573.2L779.5 575.2L781.4 573.2L783.3 575.2L785.2 573.2L787.1 575.2L789.0 573.2L790.9 575.2L792.8 573.2L794.7 575.2L796.6 573.2L798.5 575.2L800.4 573.2L802.3 575.2L804.2 573.2L806.1 575.2L808.0 573.2L809.9 575.2L811.8 573.2M831.8 575.2L833.7 573.2L835.6 575.2L837.5 573.2L839.4 575.2L841.3 573.2L843.2 575.2L845.1 573.2L847.0 575.2L848.9 573.2L850.8 575.2L852.7 573.2L854.6 575.2L856.5 573.2L858.4 575.2L860.3 573.2L862.2 575.2L864.1 573.2L866.0 575.2L867.9 573.2L869.8 575.2L871.7 573.2L873.6 575.2M158.6 598.4L160.5 596.4L162.4 598.4L164.3 596.4L166.2 598.4L168.1 596.4L170.0 598.4L171.9 596.4L173.8 598.4L175.7 596.4L177.6 598.4L179.5 596.4L181.4 598.4L183.3 596.4L185.2 598.4L187.1 596.4L189.0 598.4L190.9 596.4L192.8 598.4L194.7 596.4L196.6 598.4L198.5 596.4L200.4 598.4L202.3 596.4L204.2 598.4L206.1 596.4L208.0 598.4L209.9 596.4L211.8 598.4L213.7 596.4L215.6 598.4L217.5 596.4L219.4 598.4L221.3 596.4L223.2 598.4L225.1 596.4L227.0 598.4L228.9 596.4L230.8 598.4L232.7 596.4L234.6 598.4L236.5 596.4L238.4 598.4L240.3 596.4L242.2 598.4L244.1 596.4L246.0 598.4M251.7 598.4L253.6 596.4L255.5 598.4L257.4 596.4L259.3 598.4L261.2 596.4L263.1 598.4L265.0 596.4L266.9 598.4L268.8 596.4L270.7 598.4L272.6 596.4L274.5 598.4L276.4 596.4L278.3 598.4L280.2 596.4L282.1 598.4L284.0 596.4L285.9 598.4L287.8 596.4M377.2 598.4L379.1 596.4L381.0 598.4L382.9 596.4L384.8 598.4L386.7 596.4L388.6 598.4L390.5 596.4L392.4 598.4L394.3 596.4L396.2 598.4L398.1 596.4L400.0 598.4L401.9 596.4L403.8 598.4L405.7 596.4L407.6 598.4M414.6 598.4L416.5 596.4L418.4 598.4L420.3 596.4L422.2 598.4L424.1 596.4L426.0 598.4L427.9 596.4L429.8 598.4L431.7 596.4L433.6 598.4L435.5 596.4L437.4 598.4L439.3 596.4L441.2 598.4L443.1 596.4L445.0 598.4L446.9 596.4L448.8 598.4L450.7 596.4L452.6 598.4L454.5 596.4L456.4 598.4L458.3 596.4L460.2 598.4L462.1 596.4L464.0 598.4L465.9 596.4L467.8 598.4L469.7 596.4L471.6 598.4L473.5 596.4L475.4 598.4L477.3 596.4L479.2 598.4L481.1 596.4L483.0 598.4L484.9 596.4L486.8 598.4L488.7 596.4L490.6 598.4L492.5 596.4L494.4 598.4L496.3 596.4L498.2 598.4L500.1 596.4L502.0 598.4L503.9 596.4L505.8 598.4L507.7 596.4L509.6 598.4L511.5 596.4L513.4 598.4L515.3 596.4L517.2 598.4L519.1 596.4L521.0 598.4L522.9 596.4L524.8 598.4L526.7 596.4L528.6 598.4L530.5 596.4L532.4 598.4L534.3 596.4L536.2 598.4M628.5 598.4L630.4 596.4L632.3 598.4L634.2 596.4L636.1 598.4L638.0 596.4L639.9 598.4L641.8 596.4L643.7 598.4L645.6 596.4L647.5 598.4L649.4 596.4L651.3 598.4L653.2 596.4L655.1 598.4L657.0 596.4L658.9 598.4L660.8 596.4L662.7 598.4L664.6 596.4L666.5 598.4L668.4 596.4L670.3 598.4L672.2 596.4L674.1 598.4L676.0 596.4L677.9 598.4L679.8 596.4L681.7 598.4L683.6 596.4L685.5 598.4L687.4 596.4L689.3 598.4L691.2 596.4M717.8 598.4L719.7 596.4L721.6 598.4L723.5 596.4L725.4 598.4L727.3 596.4L729.2 598.4L731.1 596.4L733.0 598.4L734.9 596.4L736.8 598.4L738.7 596.4L740.6 598.4L742.5 596.4L744.4 598.4L746.3 596.4L748.2 598.4L750.1 596.4L752.0 598.4L753.9 596.4L755.8 598.4L757.7 596.4L759.6 598.4L761.5 596.4L763.4 598.4L765.3 596.4L767.2 598.4L769.1 596.4L771.0 598.4L772.9 596.4L774.8 598.4L776.7 596.4M158.6 621.4L160.5 619.4L162.4 621.4L164.3 619.4L166.2 621.4L168.1 619.4L170.0 621.4L171.9 619.4L173.8 621.4L175.7 619.4L177.6 621.4L179.5 619.4L181.4 621.4L183.3 619.4L185.2 621.4L187.1 619.4L189.0 621.4L190.9 619.4L192.8 621.4L194.7 619.4L196.6 621.4L198.5 619.4L200.4 621.4L202.3 619.4L204.2 621.4L206.1 619.4L208.0 621.4L209.9 619.4L211.8 621.4L213.7 619.4L215.6 621.4L217.5 619.4L219.4 621.4L221.3 619.4L223.2 621.4L225.1 619.4L227.0 621.4L228.9 619.4L230.8 621.4L232.7 619.4L234.6 621.4L236.5 619.4L238.4 621.4L240.3 619.4L242.2 621.4L244.1 619.4L246.0 621.4L247.9 619.4L249.8 621.4L251.7 619.4L253.6 621.4L255.5 619.4M311.3 621.4L313.2 619.4L315.1 621.4L317.0 619.4L318.9 621.4L320.8 619.4L322.7 621.4L324.6 619.4L326.5 621.4L328.4 619.4M334.8 621.4L336.7 619.4L338.6 621.4L340.5 619.4L342.4 621.4L344.3 619.4L346.2 621.4L348.1 619.4L350.0 621.4L351.9 619.4L353.8 621.4L355.7 619.4L357.6 621.4L359.5 619.4L361.4 621.4L363.3 619.4L365.2 621.4L367.1 619.4L369.0 621.4L370.9 619.4L372.8 621.4M466.2 621.4L468.1 619.4L470.0 621.4L471.9 619.4L473.8 621.4L475.7 619.4L477.6 621.4L479.5 619.4L481.4 621.4L483.3 619.4L485.2 621.4L487.1 619.4L489.0 621.4L490.9 619.4L492.8 621.4L494.7 619.4L496.6 621.4L498.5 619.4L500.4 621.4L502.3 619.4L504.2 621.4L506.1 619.4L508.0 621.4L509.9 619.4L511.8 621.4L513.7 619.4L515.6 621.4L517.5 619.4L519.4 621.4L521.3 619.4L523.2 621.4L525.1 619.4L527.0 621.4L528.9 619.4L530.8 621.4L532.7 619.4L534.6 621.4L536.5 619.4L538.4 621.4L540.3 619.4L542.2 621.4L544.1 619.4L546.0 621.4L547.9 619.4' fill='none' stroke='#dc2a30' stroke-width='1.25'/></svg></body></html>
